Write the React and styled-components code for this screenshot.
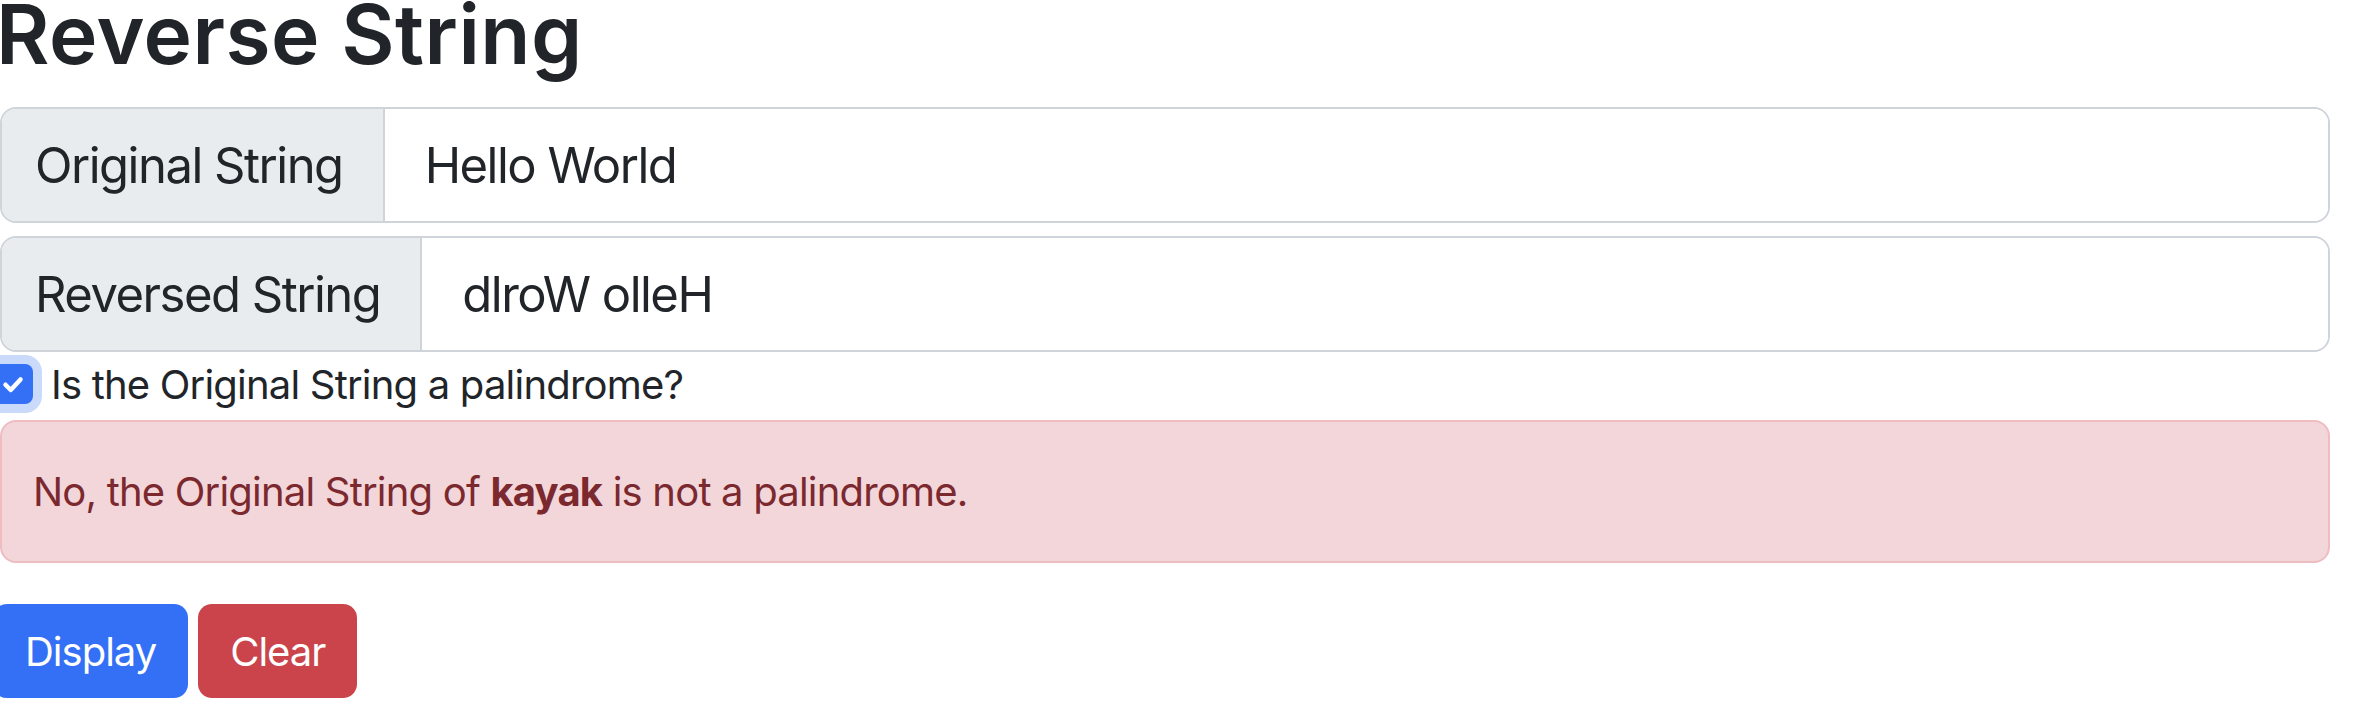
import React from 'react';
import styled, { createGlobalStyle } from 'styled-components';

const GlobalStyle = createGlobalStyle`
    body {
        margin:0;
        background-color:white;
        font-family:Inter, "Noto Sans", sans-serif;
        color:#212529;
        overflow:hidden;
    }
`;

const original = 'Hello World';

const App = () => {
    const reversed = original.split('').reverse().join('');

    return (
        <Page>
            <GlobalStyle />
            <Title>Reverse String</Title>
            <Group>
                <GroupLabel>Original String</GroupLabel>
                <GroupInput value={original} readOnly />
            </Group>
            <Group>
                <GroupLabel>Reversed String</GroupLabel>
                <GroupInput value={reversed} readOnly />
            </Group>
            <CheckRow>
                <CheckBox>
                    <svg width="30" height="30" viewBox="0 0 20 20" fill="none">
                        <path d="M5 10.5l3.5 3.5 6.5-7" stroke="white" strokeWidth="3" strokeLinecap="round" strokeLinejoin="round" />
                    </svg>
                </CheckBox>
                <CheckLabel>Is the Original String a palindrome?</CheckLabel>
            </CheckRow>
            <Alert>
                <span>No, the Original String of <b>kayak</b> is not a palindrome.</span>
            </Alert>
            <Buttons>
                <Button color="#3470f5">Display</Button>
                <Button color="#cb444b">Clear</Button>
            </Buttons>
        </Page>
    );
};

export default App;

const Page = styled.div`
    display:flex;
    flex-direction:column;
    width:2330px;
`;

const Title = styled.h1`
    margin:-6px 0 31px -4px;
    font-size:82px;
    line-height:82px;
    font-weight:600;
    letter-spacing:0.5px;
`;

const Group = styled.div`
    display:flex;
    height:116px;
    box-sizing:border-box;
    border:2px solid #ced4da;
    border-radius:16px;
    overflow:hidden;
    margin-bottom:13px;

    &:nth-of-type(2) {
        margin-bottom:0;
    }
`;

const GroupLabel = styled.div`
    display:flex;
    align-items:center;
    padding:0 40px 0 33px;
    background-color:#e9ecef;
    border-right:2px solid #ced4da;
    font-size:49px;
    letter-spacing:-1.5px;
    white-space:nowrap;
`;

const GroupInput = styled.input`
    flex:1;
    border:none;
    outline:none;
    padding:0 40px;
    font-family:Inter, "Noto Sans", sans-serif;
    font-size:49px;
    letter-spacing:-1.5px;
    color:#212529;
    background-color:white;
`;

const CheckRow = styled.div`
    display:flex;
    align-items:center;
    gap:18px;
    padding:12px 0 16px;
    margin-left:-7px;
`;

const CheckBox = styled.span`
    display:flex;
    justify-content:center;
    align-items:center;
    width:40px;
    height:40px;
    border-radius:8px;
    background-color:#3470f5;
    box-shadow:0 0 0 9px #c9dafb;
`;

const CheckLabel = styled.label`
    font-size:40px;
    line-height:39px;
    letter-spacing:-0.8px;
`;

const Alert = styled.div`
    display:flex;
    align-items:center;
    height:143px;
    box-sizing:border-box;
    padding:0 31px;
    background-color:#f2d6da;
    border:2px solid #efbcc2;
    border-radius:16px;
    color:#7b282e;
    font-size:40px;
    letter-spacing:-0.8px;

    b {
        font-weight:700;
    }
`;

const Buttons = styled.div`
    display:flex;
    gap:10px;
    margin:41px 0 0 -7px;
`;

const Button = styled.button`
    height:94px;
    padding:0 32px;
    border:none;
    border-radius:14px;
    background-color:${(props) => props.color};
    color:white;
    font-family:Inter, "Noto Sans", sans-serif;
    font-size:40px;
    letter-spacing:-1px;
    cursor:pointer;
`;
